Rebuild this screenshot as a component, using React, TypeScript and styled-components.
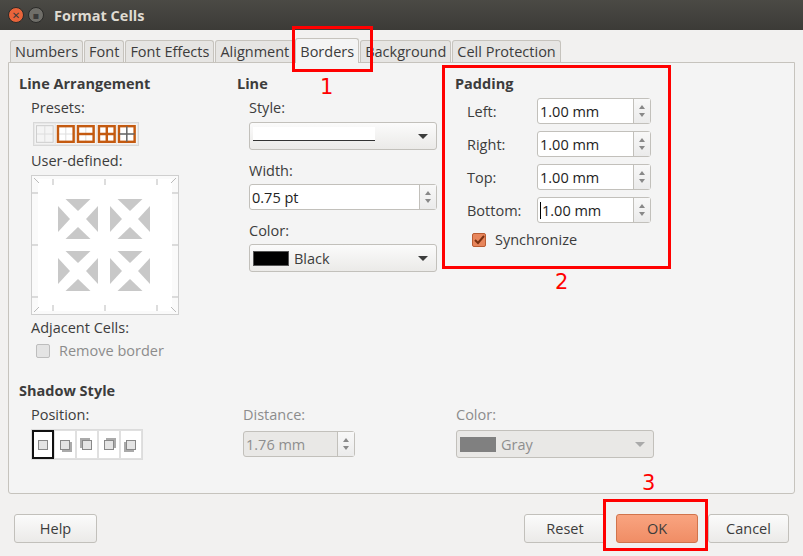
import React from "react";
import styled, { createGlobalStyle } from "styled-components";

const G = createGlobalStyle`
  html,body{margin:0;padding:0;background:#f2f1f0;}
  body{font-family:"Open Sans","DejaVu Sans",sans-serif;font-size:14.5px;color:#3c3c3c;}
  *{box-sizing:border-box;}
`;

const Win = styled.div`width:803px;height:556px;position:relative;background:#f2f1f0;display:flex;flex-direction:column;overflow:hidden;`;
const Title = styled.div`height:30px;background:linear-gradient(#4b4a45,#3c3b37);display:flex;align-items:center;padding-left:8px;gap:4px;color:#dfdbd2;font-weight:bold;font-size:14.5px;`;
const Dot = styled.div<{ c: string }>`width:16px;height:16px;border-radius:50%;background:${p => p.c};display:flex;align-items:center;justify-content:center;color:#3a3a3a;font-size:10px;line-height:1;border:1px solid #2a2a28;`;
const Tabs = styled.div`display:flex;margin:9px 0 0 10px;align-items:flex-end;height:23px;`;
const Tab = styled.div<{ a?: boolean }>`height:${p => p.a ? 25 : 22}px;padding:0 4px;border:1px solid #c6c3bd;border-bottom:none;border-radius:3px 3px 0 0;background:${p => p.a ? "#f4f4f4" : "#e6e5e3"};display:flex;align-items:center;font-size:14.5px;margin-right:1px;${p => p.a ? "margin-bottom:-1px;z-index:1;position:relative;" : ""}`;
const Panel = styled.div`margin:0 8px;height:432px;border:1px solid #c6c3bd;border-radius:0 0 3px 3px;background:#f4f4f4;padding:11px 10px 0 10px;display:flex;flex-direction:column;`;
const Top = styled.div`display:grid;grid-template-columns:218px 218px 220px;height:291px;`;
const Col = styled.div`display:flex;flex-direction:column;`;
const H = styled.div`font-weight:bold;font-size:14.5px;height:20px;`;
const L = styled.div<{ dim?: boolean }>`margin-left:${p => p.dim ? 0 : 12}px;height:20px;margin-top:4px;color:${p => p.dim ? "#8c8c8c" : "#3c3c3c"};`;
const Presets = styled.div`margin:4px 0 0 14px;display:flex;border:1px solid #d8d8d8;width:106px;padding:1px;gap:1px;background:#e8e8e8;`;
const Preview = styled.div`margin:4px 0 0 12px;width:148px;height:140px;border:1px solid #cfcfcf;background:#fafafa;`;
const Check = styled.div<{ on?: boolean }>`width:14px;height:14px;border-radius:2px;border:1px solid ${p => p.on ? "#b95c33" : "#bdbdbd"};background:${p => p.on ? "#e7855b" : "#e4e4e4"};display:flex;align-items:center;justify-content:center;`;
const Row = styled.div<{ ml?: number; mt?: number }>`display:flex;align-items:center;gap:9px;margin-left:${p => p.ml ?? 0}px;margin-top:${p => p.mt ?? 0}px;`;
const Combo = styled.div<{ w: number; dis?: boolean }>`width:${p => p.w}px;height:28px;border:1px solid #c2c0bb;border-radius:3px;background:${p => p.dis ? "#e9e8e6" : "linear-gradient(#fbfbfb,#ebeae8)"};display:flex;align-items:center;padding:0 8px 0 3px;gap:5px;color:${p => p.dis ? "#8e8e8e" : "#3c3c3c"};`;
const Arrow = styled.div<{ dis?: boolean }>`margin-left:auto;width:0;height:0;border-left:5px solid transparent;border-right:5px solid transparent;border-top:5px solid ${p => p.dis ? "#aaa" : "#3c3c3c"};`;
const Swatch = styled.div<{ c: string }>`width:36px;height:15px;background:${p => p.c};border:1px solid #555;`;
const Spin = styled.div<{ w: number; dis?: boolean }>`width:${p => p.w}px;height:26px;border:1px solid #c2c0bb;border-radius:3px;display:flex;background:${p => p.dis ? "#e9e8e6" : "#fff"};color:${p => p.dis ? "#8e8e8e" : "#222"};font-size:14.5px;`;
const SpinText = styled.div`flex:1;display:flex;align-items:center;padding-left:2px;`;
const SpinBtn = styled.div`width:17px;border-left:1px solid #c2c0bb;background:linear-gradient(#f8f8f8,#ebebeb);display:flex;flex-direction:column;align-items:center;justify-content:center;gap:4px;`;
const Tri = styled.div<{ up?: boolean }>`width:0;height:0;border-left:3px solid transparent;border-right:3px solid transparent;${p => p.up ? "border-bottom:4px solid #888;" : "border-top:4px solid #888;"}`;
const PadGrid = styled.div`display:grid;grid-template-columns:70px 114px;row-gap:7px;margin:4px 0 0 12px;align-items:center;`;
const Shadow = styled.div`display:grid;grid-template-columns:224px 213px 220px;margin-top:16px;`;
const PosBox = styled.div`margin:4px 0 0 12px;display:flex;width:112px;border:1px solid #dcdcdc;`;
const PosItem = styled.div<{ sel?: boolean }>`width:22px;height:29px;border:${p => p.sel ? "2px solid #111" : "1px solid #e0e0e0"};background:#fff;display:flex;align-items:center;justify-content:center;`;
const Foot = styled.div`display:flex;padding:20px 14px 0 14px;align-items:center;`;
const Gap = styled.div<{ w?: number }>`${p => p.w ? `width:${p.w}px;` : "flex:1;"}`;
const Btn = styled.div<{ ok?: boolean; w: number }>`width:${p => p.w}px;height:29px;border:1px solid ${p => p.ok ? "#d1744c" : "#c2c0bb"};border-radius:3px;background:${p => p.ok ? "linear-gradient(#f9a480,#f08d65)" : "linear-gradient(#fbfbfb,#ebeae8)"};display:flex;align-items:center;justify-content:center;font-size:14.5px;color:#3c3c3c;`;
const RedBox = styled.div<{ x: number; y: number; w: number; h: number }>`position:absolute;left:${p => p.x}px;top:${p => p.y}px;width:${p => p.w}px;height:${p => p.h}px;border:3px solid #f00;z-index:5;`;
const Num = styled.div<{ x: number; y: number }>`position:absolute;left:${p => p.x}px;top:${p => p.y}px;color:#f00;font-size:21px;z-index:5;font-family:"DejaVu Sans",sans-serif;`;

const PresetIcon = ({ kind }: { kind: number }) => (
  <svg width="20" height="20" viewBox="0 0 20 20">
    <rect x="0" y="0" width="20" height="20" fill={kind === 0 ? "#f4f4f4" : "#fff"} />
    <path d="M10 2V18M2 10H18" stroke="#ddd" />
    {kind === 0 && <rect x="1.5" y="1.5" width="17" height="17" fill="none" stroke="#ccc" />}
    {kind > 0 && <rect x="2" y="2" width="16" height="16" fill="none" stroke="#c45a10" strokeWidth="2.5" />}
    {kind === 2 && <path d="M2 10H18" stroke="#c45a10" strokeWidth="2.5" />}
    {kind === 3 && <path d="M10 2V18M2 10H18" stroke="#c45a10" strokeWidth="2.5" />}
    {kind === 4 && <path d="M10 2V18M2 10H18" stroke="#666" strokeWidth="1.5" />}
  </svg>
);

const Cross = ({ cx, cy }: { cx: number; cy: number }) => (
  <g fill="#c8c8c8">
    <polygon points={`${cx - 12.5},${cy - 20} ${cx + 12.5},${cy - 20} ${cx},${cy - 8}`} />
    <polygon points={`${cx - 12.5},${cy + 20} ${cx + 12.5},${cy + 20} ${cx},${cy + 8}`} />
    <polygon points={`${cx - 20},${cy - 13} ${cx - 20},${cy + 13} ${cx - 8},${cy}`} />
    <polygon points={`${cx + 20},${cy - 13} ${cx + 20},${cy + 13} ${cx + 8},${cy}`} />
  </g>
);

const PreviewArt = () => (
  <svg width="146" height="138" viewBox="0 0 146 138">
    <rect x="6" y="3" width="134" height="132" fill="#fff" />
    <g stroke="#bbb">
      <path d="M21 3V9M73 3V9M125 3V9M21 129V135M73 129V135M125 129V135M0 17H6M0 69H6M0 121H6M140 17H146M140 69H146M140 121H146" />
      <path d="M2 2L7 7M144 2L139 7M2 136L7 131M144 136L139 131" />
    </g>
    <Cross cx={46} cy={43} />
    <Cross cx={98} cy={43} />
    <Cross cx={46} cy={95} />
    <Cross cx={98} cy={95} />
  </svg>
);

const PosIcon = ({ i }: { i: number }) => {
  const off = [[0, 0], [2, 2], [-2, -2], [2, -2], [-2, 2]][i];
  return (
    <svg width="16" height="18" viewBox="0 0 16 18">
      {i > 0 && <rect x={3 + off[0]} y={4 + off[1]} width="10" height="10" fill="#aaa" />}
      <rect x="3.5" y="4.5" width="9" height="9" fill="#e4e4e4" stroke="#888" />
    </svg>
  );
};

const Caret = styled.span`border-left:1px solid #000;height:17px;margin-right:1px;`;
const StyleLine = styled.div`width:122px;height:14px;background:#fff;border-bottom:1px solid #333;margin-top:-4px;`;

const SpinField = ({ v, w, dis, cursor }: { v: string; w: number; dis?: boolean; cursor?: boolean }) => (
  <Spin w={w} dis={dis}>
    <SpinText>{cursor && <Caret />}{v}</SpinText>
    <SpinBtn><Tri up /><Tri /></SpinBtn>
  </Spin>
);

export default function App() {
  return (
    <Win>
      <G />
      <Title><Dot c="#e9643a">✕</Dot><Dot c="#6f6e69">▪</Dot><span style={{ marginLeft: 6 }}>Format Cells</span></Title>
      <Tabs>
        {["Numbers", "Font", "Font Effects", "Alignment"].map(t => <Tab key={t}>{t}</Tab>)}
        <Tab a>Borders</Tab>
        <Tab>Background</Tab>
        <Tab>Cell Protection</Tab>
      </Tabs>
      <Panel>
        <Top>
          <Col>
            <H>Line Arrangement</H>
            <L>Presets:</L>
            <Presets>{[0, 1, 2, 3, 4].map(k => <PresetIcon key={k} kind={k} />)}</Presets>
            <L style={{ marginTop: 5 }}>User-defined:</L>
            <Preview><PreviewArt /></Preview>
            <L style={{ marginTop: 3 }}>Adjacent Cells:</L>
            <Row ml={17} mt={3}><Check /><span style={{ color: "#8c8c8c" }}>Remove border</span></Row>
          </Col>
          <Col>
            <H>Line</H>
            <L>Style:</L>
            <Row ml={12} mt={4}><Combo w={188}><StyleLine /><Arrow /></Combo></Row>
            <L style={{ marginTop: 11 }}>Width:</L>
            <Row ml={12} mt={3}><SpinField w={188} v="0.75 pt" /></Row>
            <L style={{ marginTop: 11 }}>Color:</L>
            <Row ml={12} mt={3}><Combo w={188}><Swatch c="#000" />Black<Arrow /></Combo></Row>
          </Col>
          <Col>
            <H>Padding</H>
            <PadGrid>
              <span>Left:</span><SpinField w={114} v="1.00 mm" />
              <span>Right:</span><SpinField w={114} v="1.00 mm" />
              <span>Top:</span><SpinField w={114} v="1.00 mm" />
              <span>Bottom:</span><SpinField w={114} v="1.00 mm" cursor />
            </PadGrid>
            <Row ml={17} mt={7}>
              <Check on><svg width="11" height="10" viewBox="0 0 11 10"><path d="M1 5L4 8L10 1" fill="none" stroke="#7a3010" strokeWidth="2" /></svg></Check>
              <span>Synchronize</span>
            </Row>
          </Col>
        </Top>
        <Shadow>
          <Col>
            <H>Shadow Style</H>
            <L>Position:</L>
            <PosBox>{[0, 1, 2, 3, 4].map(i => <PosItem key={i} sel={i === 0}><PosIcon i={i} /></PosItem>)}</PosBox>
          </Col>
          <Col>
            <H />
            <L dim>Distance:</L>
            <Row mt={6}><SpinField w={112} v="1.76 mm" dis /></Row>
          </Col>
          <Col>
            <H />
            <L dim>Color:</L>
            <Row mt={5}><Combo w={198} dis><Swatch c="#808080" style={{ borderColor: "#808080" }} />Gray<Arrow dis /></Combo></Row>
          </Col>
        </Shadow>
      </Panel>
      <Foot>
        <Btn w={83}>Help</Btn>
        <Gap />
        <Btn w={82}>Reset</Btn>
        <Gap w={10} />
        <Btn ok w={82}>OK</Btn>
        <Gap w={10} />
        <Btn w={81}>Cancel</Btn>
      </Foot>
      <RedBox x={292} y={26} w={81} h={46} />
      <Num x={320} y={75}>1</Num>
      <RedBox x={442} y={65} w={229} h={204} />
      <Num x={555} y={270}>2</Num>
      <RedBox x={603} y={499} w={105} h={52} />
      <Num x={642} y={471}>3</Num>
    </Win>
  );
}
